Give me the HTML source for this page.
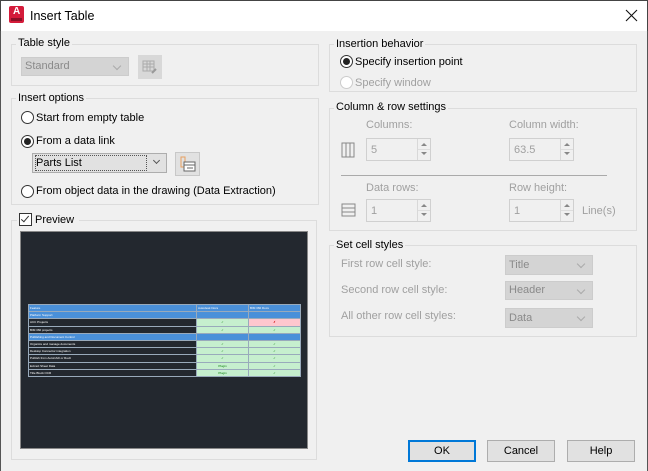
<!DOCTYPE html>
<html><head><meta charset="utf-8"><style>
*{margin:0;padding:0;box-sizing:border-box}
body{width:648px;height:471px;background:#f0f0f0;font-family:"Liberation Sans",sans-serif;font-size:11px;color:#000;position:relative;overflow:hidden}
.a{position:absolute}
.grp{position:absolute;border:1px solid #dcdcdc}
.lbl{position:absolute;background:#f0f0f0;padding:0 2px;font-size:11px;white-space:nowrap;line-height:13px}
.t{position:absolute;white-space:nowrap;line-height:13px;font-size:11px}
.dis{color:#a0a0a0}
.radio{position:absolute;width:13px;height:13px;border:1px solid #333;border-radius:50%;background:#fff}
.radio.on::after{content:"";position:absolute;left:2px;top:2px;width:7px;height:7px;border-radius:50%;background:#222}
.combo{position:absolute;background:#d4d4d4;border:1px solid #ccc;color:#8a8a8a;line-height:18px;padding-left:3px;font-size:11px}
.combo::after{content:"";position:absolute;right:8px;top:5px;width:5px;height:5px;border-right:1px solid #aaa;border-bottom:1px solid #aaa;transform:rotate(45deg)}
.inp{position:absolute;width:65px;height:23px;border:1px solid #d0d0d0;background:#f0f0f0;color:#a0a0a0;padding:5px 0 0 4px;font-size:11px}
.spin{position:absolute;right:0;top:0;width:13px;height:21px;border-left:1px solid #d8d8d8}
.spin::before{content:"";position:absolute;left:3px;top:4px;border:3px solid transparent;border-bottom:3px solid #888;border-top:0}
.spin::after{content:"";position:absolute;left:3px;top:13px;border:3px solid transparent;border-top:3px solid #888;border-bottom:0}
.spin i{position:absolute;left:0;right:0;top:10px;border-top:1px solid #ddd}
.btn{position:absolute;width:68px;height:22px;background:#e1e1e1;border:1px solid #adadad;text-align:center;line-height:20px;font-size:11px}
table{border-collapse:collapse;width:100%;height:100%}
td{border:1px solid #9ab;font-size:3px;color:#fff;padding:0 1px;height:7px}
.h td{background:#4a90d9}
.d td{background:#23282f}
.g{background:#c6efce!important;color:#070!important;text-align:center}
.r{background:#ffc7ce!important;color:#c00!important;text-align:center}
</style></head><body>
<div class="a" style="left:0;top:0;width:648px;height:31px;background:#fff;border-left:1px solid #444;border-right:1px solid #444;border-top:1px solid #444"></div>
<div class="a" style="left:0;top:31px;width:1px;height:440px;background:#555"></div>
<div class="a" style="left:647px;top:31px;width:1px;height:440px;background:#555"></div>
<div class="a" style="left:9px;top:6px;width:15px;height:17px;background:#d41b3a;border-radius:2px"></div>
<div class="a" style="left:13px;top:6px;color:#fff;font-weight:bold;font-size:10px">A</div>
<div class="a" style="left:11px;top:18px;width:11px;height:3px;background:#8a1026"></div>
<div class="t" style="left:30px;top:9px;font-size:12.5px;line-height:15px">Insert Table</div>
<svg class="a" style="left:625px;top:9px" width="13" height="13"><path d="M1 1L12 12M12 1L1 12" stroke="#111" stroke-width="1.1"/></svg>

<div class="grp" style="left:11px;top:44px;width:308px;height:42px"></div>
<div class="lbl" style="left:16px;top:37px">Table style</div>
<div class="combo" style="left:21px;top:57px;width:108px;height:19px;line-height:17px">Standard</div>
<div class="a" style="left:138px;top:55px;width:24px;height:24px;background:#d8d8d8"></div>
<svg class="a" style="left:142px;top:59px" width="16" height="16"><rect x="1" y="2" width="11" height="10" fill="none" stroke="#aaa"/><path d="M1 5H12M1 8H12M5 2V12M8 2V12" stroke="#aaa"/><path d="M10 14L14 10" stroke="#999" stroke-width="2"/></svg>

<div class="grp" style="left:11px;top:98px;width:308px;height:107px"></div>
<div class="lbl" style="left:16px;top:92px">Insert options</div>
<div class="radio" style="left:21px;top:111px"></div><div class="t" style="left:36px;top:112px">Start from empty table</div>
<div class="radio on" style="left:21px;top:135px"></div><div class="t" style="left:36px;top:135px">From a data link</div>
<div class="a" style="left:32px;top:153px;width:135px;height:20px;background:#e1e1e1;border:1px solid #adadad"></div>
<div class="a" style="left:35px;top:155px;width:112px;height:16px;border:1px dotted #555"></div>
<div class="t" style="left:36px;top:157px">Parts List</div>
<div class="a" style="left:154px;top:158px;width:5px;height:5px;border-right:1px solid #555;border-bottom:1px solid #555;transform:rotate(45deg)"></div>
<div class="a" style="left:175px;top:152px;width:25px;height:24px;background:#e1e1e1;border:1px solid #c8c8c8"></div>
<svg class="a" style="left:179px;top:155px" width="18" height="18"><rect x="2" y="2" width="4" height="10" fill="none" stroke="#e8a060"/><rect x="5" y="7" width="11" height="9" fill="#fff" stroke="#666"/><path d="M5 10H16M8 13H14" stroke="#666"/></svg>
<div class="radio" style="left:21px;top:185px"></div><div class="t" style="left:36px;top:185px">From object data in the drawing (Data Extraction)</div>

<div class="grp" style="left:11px;top:220px;width:306px;height:240px"></div>
<div class="lbl" style="left:17px;top:213px;width:62px;height:14px"></div>
<div class="a" style="left:19px;top:213px;width:13px;height:13px;border:1px solid #333;background:#fff"></div>
<div class="a" style="left:23px;top:214px;width:4px;height:8px;border-right:1.5px solid #333;border-bottom:1.5px solid #333;transform:rotate(40deg)"></div>
<div class="t" style="left:35px;top:214px">Preview</div>
<div class="a" style="left:20px;top:231px;width:288px;height:218px;background:#23282f;border:1px solid #888"></div>
<div class="a" style="left:28px;top:304px;width:273px;height:73px">
<table>
<tr class="h"><td style="width:168px">Feature</td><td style="width:52px">Autodesk Docs</td><td>BIM 360 Docs</td></tr>
<tr class="h"><td>Platform Support</td><td></td><td></td></tr>
<tr class="d"><td>ACC Projects</td><td class="g">✓</td><td class="r">✗</td></tr>
<tr class="d"><td>BIM 360 projects</td><td class="g">✓</td><td class="g">✓</td></tr>
<tr class="h"><td>Publishing and Document Control</td><td></td><td></td></tr>
<tr class="d"><td>Organize and manage documents</td><td class="g">✓</td><td class="g">✓</td></tr>
<tr class="d"><td>Desktop Connector integration</td><td class="g">✓</td><td class="g">✓</td></tr>
<tr class="d"><td>Publish from AutoCAD or Revit</td><td class="g">✓</td><td class="g">✓</td></tr>
<tr class="d"><td>Extract Sheet Data</td><td class="g">Plugin</td><td class="g">✓</td></tr>
<tr class="d"><td>Title Block OCR</td><td class="g">Plugin</td><td class="g">✓</td></tr>
</table></div>

<div class="grp" style="left:329px;top:44px;width:308px;height:48px"></div>
<div class="lbl" style="left:334px;top:38px">Insertion behavior</div>
<div class="radio on" style="left:340px;top:55px"></div><div class="t" style="left:355px;top:56px">Specify insertion point</div>
<div class="radio" style="left:340px;top:76px;border-color:#ccc"></div><div class="t dis" style="left:355px;top:77px">Specify window</div>

<div class="grp" style="left:329px;top:108px;width:308px;height:123px"></div>
<div class="lbl" style="left:334px;top:101px">Column &amp; row settings</div>
<div class="t dis" style="left:366px;top:119px">Columns:</div>
<div class="t dis" style="left:509px;top:119px">Column width:</div>
<svg class="a" style="left:341px;top:141px" width="15" height="18"><rect x="1" y="2" width="12" height="14" fill="none" stroke="#888"/><path d="M5 2V16M9 2V16" stroke="#888"/></svg>
<div class="inp" style="left:366px;top:138px">5<div class="spin"><i></i></div></div>
<div class="inp" style="left:509px;top:138px">63.5<div class="spin"><i></i></div></div>
<div class="a" style="left:341px;top:175px;width:266px;height:1px;background:#aaa"></div>
<div class="t dis" style="left:366px;top:182px">Data rows:</div>
<div class="t dis" style="left:509px;top:182px">Row height:</div>
<svg class="a" style="left:341px;top:203px" width="15" height="15"><rect x="1" y="1" width="13" height="12" fill="none" stroke="#888"/><path d="M1 5H14M1 9H14" stroke="#888"/></svg>
<div class="inp" style="left:366px;top:199px">1<div class="spin"><i></i></div></div>
<div class="inp" style="left:509px;top:199px">1<div class="spin"><i></i></div></div>
<div class="t dis" style="left:582px;top:205px">Line(s)</div>

<div class="grp" style="left:329px;top:245px;width:308px;height:92px"></div>
<div class="lbl" style="left:334px;top:239px">Set cell styles</div>
<div class="t dis" style="left:341px;top:258px">First row cell style:</div>
<div class="t dis" style="left:341px;top:284px">Second row cell style:</div>
<div class="t dis" style="left:341px;top:310px">All other row cell styles:</div>
<div class="combo" style="left:505px;top:255px;width:88px;height:20px">Title</div>
<div class="combo" style="left:505px;top:281px;width:88px;height:19px;line-height:17px">Header</div>
<div class="combo" style="left:505px;top:308px;width:88px;height:20px">Data</div>

<div class="btn" style="left:408px;top:440px;border:2px solid #0078d7;line-height:18px">OK</div>
<div class="btn" style="left:487px;top:440px">Cancel</div>
<div class="btn" style="left:567px;top:440px">Help</div>
</body></html>
